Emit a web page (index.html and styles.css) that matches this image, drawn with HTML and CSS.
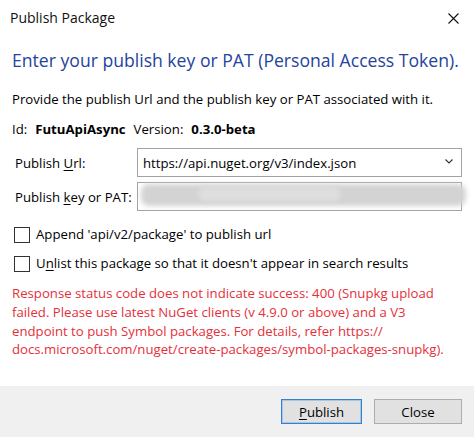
FILE: index.html
```html
<!DOCTYPE html>
<html>
<head>
<meta charset="utf-8">
<title>Publish Package</title>
<link rel="stylesheet" href="styles.css">
</head>
<body>
<div class="window">
  <div class="titlebar">
    <span class="title">Publish Package</span>
    <svg class="close" width="11" height="11" viewBox="0 0 11 11"><path d="M0.5 0.5 L10.5 10.5 M10.5 0.5 L0.5 10.5" stroke="#111" stroke-width="1.1" fill="none"/></svg>
  </div>
  <div class="content">
    <h1 class="instruction">Enter your publish key or PAT (Personal Access Token).</h1>
    <p class="desc">Provide the publish Url and the publish key or PAT associated with it.</p>
    <div class="meta"><span>Id:</span><b>FutuApiAsync</b><span>Version:</span><b>0.3.0-beta</b></div>
    <div class="form">
      <label class="label">Publish <u>U</u>rl:</label>
      <div class="combo">
        <span class="combo-text">https://api.nuget.org/v3/index.json</span>
        <svg class="chevron" width="8" height="5" viewBox="0 0 8 5"><path d="M0.5 0.5 L4 4 L7.5 0.5" stroke="#333" stroke-width="1.1" fill="none"/></svg>
      </div>
      <label class="label">Publish <u>k</u>ey or PAT:</label>
      <div class="field"><div class="redact"></div><div class="redact light"></div></div>
    </div>
    <div class="check first"><span class="box"></span><span>Append 'api/v2/package' to publish url</span></div>
    <div class="check second"><span class="box"></span><span>U<u>n</u>list this package so that it doesn't appear in search results</span></div>
    <p class="error">Response status code does not indicate success: 400 (Snupkg upload<br>failed. Please use latest NuGet clients (v 4.9.0 or above) and a V3<br>endpoint to push Symbol packages. For details, refer https://<br>docs.microsoft.com/nuget/create-packages/symbol-packages-snupkg).</p>
  </div>
  <div class="footer">
    <button class="btn btn-default"><u>P</u>ublish</button>
    <button class="btn btn-close">Close</button>
  </div>
</div>
</body>
</html>
```
FILE: styles.css
```css
html, body {
  margin: 0;
  padding: 0;
  background: #ffffff;
}
body {
  font-family: "Open Sans", "Noto Sans", sans-serif;
  color: #000;
}
.window {
  width: 474px;
  height: 437px;
  display: flex;
  flex-direction: column;
  background: #fff;
  box-sizing: border-box;
}
.titlebar {
  height: 30px;
  display: flex;
  align-items: flex-start;
  flex-shrink: 0;
}
.title {
  margin: 8px 0 0 10px;
  font-size: 14px;
  line-height: 20px;
  color: #111;
}
.close {
  margin: 13px 15px 0 auto;
  display: block;
}
.content {
  padding: 0 12px;
}
.instruction {
  margin: 17px 0 0 0;
  font-size: 17.6px;
  line-height: 27px;
  font-weight: normal;
  color: #24449c;
  white-space: nowrap;
}
.desc {
  margin: 16px 0 0 0;
  font-size: 13.2px;
  line-height: 18px;
  white-space: nowrap;
}
.meta {
  margin-top: 12px;
  font-size: 13.2px;
  line-height: 18px;
  display: flex;
  gap: 8px;
}
.meta b {
  font-weight: 700;
}
.form {
  margin-top: 10px;
  display: grid;
  grid-template-columns: 125px 1fr;
  grid-auto-rows: 29px;
  row-gap: 5px;
  align-items: center;
  font-size: 13.2px;
  line-height: 18px;
}
.label {
  padding-left: 3px;
  padding-top: 1px;
}
.label u, .check u, .btn u {
  text-decoration-thickness: 1px;
  text-underline-offset: 2px;
}
.combo {
  height: 29px;
  box-sizing: border-box;
  border: 1px solid #a2a2a2;
  display: flex;
  align-items: center;
  padding-left: 5px;
}
.combo-text {
  flex: 1;
}
.chevron {
  margin-right: 8px;
  margin-bottom: 2px;
}
.field {
  position: relative;
  height: 29px;
  box-sizing: border-box;
  border: 1px solid #a2a2a2;
}
.redact {
  position: absolute;
  left: 3px;
  right: -5px;
  top: 1px;
  height: 22px;
  background: #d3d3d3;
  border-radius: 8px;
  filter: blur(2.5px);
}
.redact.light {
  left: 60px;
  right: 120px;
  top: 4px;
  height: 14px;
  background: #dedede;
}
.check {
  display: flex;
  align-items: center;
  font-size: 13.2px;
  line-height: 18px;
  white-space: nowrap;
}
.check.first {
  margin-top: 14px;
}
.check.second {
  margin-top: 11px;
}
.box {
  width: 16px;
  height: 16px;
  box-sizing: border-box;
  border: 1px solid #333;
  margin: 1px 6px 0 2px;
  background: #fff;
  flex-shrink: 0;
}
.error {
  margin: 12px 0 0 0;
  font-size: 13.2px;
  line-height: 18.8px;
  color: #e5303a;
  white-space: nowrap;
}
.footer {
  margin-top: auto;
  height: 51px;
  flex-shrink: 0;
  background: #f0f0f0;
  box-sizing: border-box;
  padding: 13px 12px 0 12px;
  display: flex;
  justify-content: flex-end;
  align-items: flex-start;
  gap: 12px;
}
.btn {
  height: 25px;
  box-sizing: border-box;
  border: 1px solid #adadad;
  background: #e1e1e1;
  font-family: "Open Sans", "Noto Sans", sans-serif;
  font-size: 13.2px;
  line-height: 18px;
  color: #000;
  padding: 0;
  margin: 0;
}
.btn-default {
  width: 81px;
  border-color: #2f83d6;
  box-shadow: inset 0 0 0 1px rgba(0, 120, 215, 0.25);
}
.btn-close {
  width: 88px;
}
```
